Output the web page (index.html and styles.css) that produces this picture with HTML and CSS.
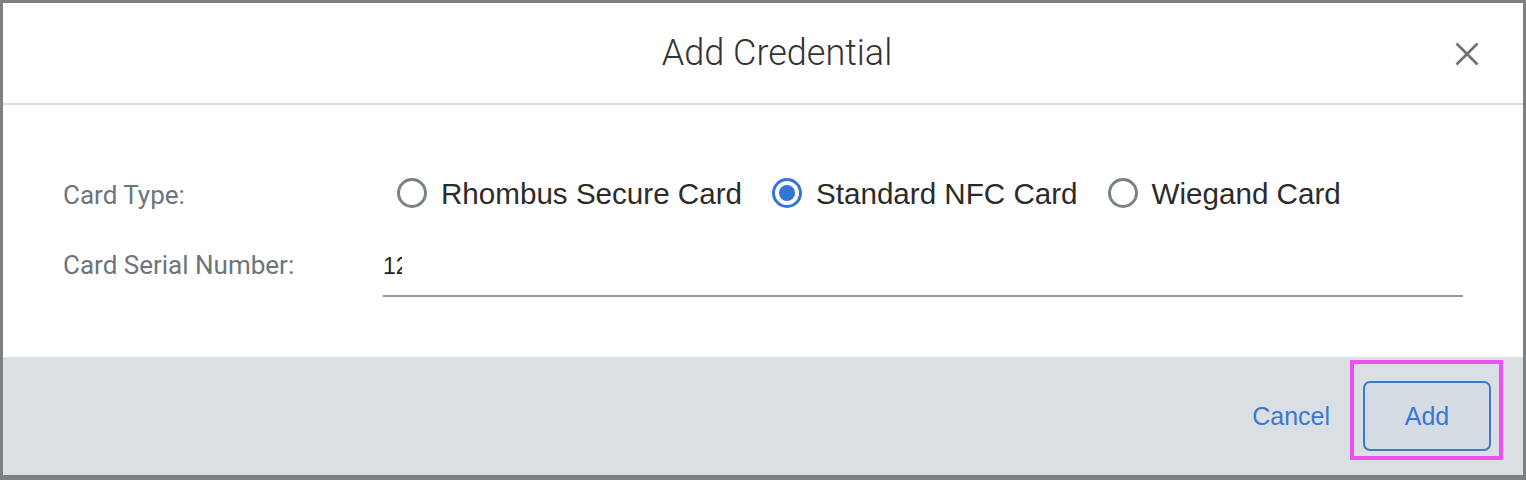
FILE: index.html
```html
<!DOCTYPE html>
<html>
<head>
<meta charset="utf-8">
<link rel="stylesheet" href="styles.css">
</head>
<body>
<div class="dialog">
  <header class="head">
    <h1 class="title">Add Credential</h1>
    <button class="close" aria-label="Close">
      <svg width="24" height="24" viewBox="0 0 24 24"><path d="M1.5 1.5 L22.5 22.5 M22.5 1.5 L1.5 22.5" stroke="#6f6f6f" stroke-width="2.6" fill="none"/></svg>
    </button>
  </header>
  <main class="body">
    <div class="row row-type">
      <div class="label">Card Type:</div>
      <div class="radios">
        <label class="radio"><span class="dot"></span><span class="rtext">Rhombus Secure Card</span></label>
        <label class="radio on"><span class="dot"></span><span class="rtext">Standard NFC Card</span></label>
        <label class="radio"><span class="dot"></span><span class="rtext">Wiegand Card</span></label>
      </div>
    </div>
    <div class="row row-serial">
      <div class="label">Card Serial Number:</div>
      <div class="field"><span class="value">12</span></div>
    </div>
  </main>
  <footer class="foot">
    <button class="btn-link">Cancel</button>
    <button class="btn-add">Add</button>
    <div class="highlight"></div>
  </footer>
</div>
</body>
</html>
```

FILE: styles.css
```css
html, body {
  margin: 0;
  padding: 0;
}
body {
  width: 1526px;
  height: 480px;
  background: #7f7f7f;
  overflow: hidden;
}
.dialog {
  margin: 3px 3px 0 3px;
  height: 472px;
  background: #fff;
  display: flex;
  flex-direction: column;
}
.head {
  height: 100px;
  border-bottom: 2px solid #d9dee3;
  position: relative;
  display: flex;
  align-items: center;
  justify-content: center;
  padding-left: 28px;
}
.title {
  margin: 0;
  font-family: Roboto, "Liberation Sans", sans-serif;
  font-weight: 300;
  font-size: 36px;
  color: #333;
}
.close {
  position: absolute;
  right: 44px;
  top: 39px;
  width: 24px;
  height: 24px;
  padding: 0;
  border: 0;
  background: none;
}
.close svg { display: block; }
.body {
  flex: 1;
  padding: 73px 60px 0 60px;
}
.row {
  display: flex;
}
.row-type {
  align-items: center;
  height: 30px;
}
.row-serial {
  align-items: baseline;
  margin-top: 45px;
}
.label {
  width: 320px;
  flex: none;
  font-family: Roboto, "Liberation Sans", sans-serif;
  font-size: 26px;
  line-height: 24px;
  color: #6c757e;
}
.row-type .label {
  padding-top: 3px;
}
.radios {
  display: flex;
  align-items: center;
  gap: 30px;
  padding-left: 14px;
}
.radio {
  display: flex;
  align-items: center;
  gap: 14px;
}
.dot {
  width: 30px;
  height: 30px;
  box-sizing: border-box;
  border: 3px solid #7a8189;
  border-radius: 50%;
  position: relative;
  flex: none;
}
.radio.on .dot {
  border-color: #3474d4;
}
.radio.on .dot::after {
  content: "";
  position: absolute;
  left: 4px;
  top: 4px;
  width: 16px;
  height: 16px;
  border-radius: 50%;
  background: #3474d4;
}
.rtext {
  font-family: "Liberation Sans", Arial, sans-serif;
  font-size: 29.6px;
  color: #2b2b2b;
  padding-top: 1px;
}
.field {
  flex: 1;
  border-bottom: 2px solid #999;
  padding: 0 0 17px 0;
  font-family: "Liberation Sans", Arial, sans-serif;
  font-size: 23px;
  line-height: 24px;
  color: #222;
}
.value {
  display: inline-block;
  width: 19px;
  overflow: hidden;
  white-space: nowrap;
  vertical-align: top;
}
.foot {
  height: 118px;
  background: #dadfe3;
  display: flex;
  align-items: center;
  justify-content: flex-end;
  padding-right: 32px;
  gap: 33px;
  position: relative;
}
.btn-link {
  border: 0;
  background: none;
  padding: 0;
  font-family: "Liberation Sans", Arial, sans-serif;
  font-size: 25px;
  color: #3a78d2;
}
.btn-add {
  width: 128px;
  height: 70px;
  box-sizing: border-box;
  border: 2px solid #3a78d2;
  border-radius: 7px;
  background: #d5dce4;
  font-family: "Liberation Sans", Arial, sans-serif;
  font-size: 25px;
  color: #3a78d2;
  padding: 0;
}
.highlight {
  position: absolute;
  right: 20px;
  top: 3px;
  width: 153px;
  height: 100px;
  box-sizing: border-box;
  border: 4px solid #ee4ff0;
  pointer-events: none;
}
```
